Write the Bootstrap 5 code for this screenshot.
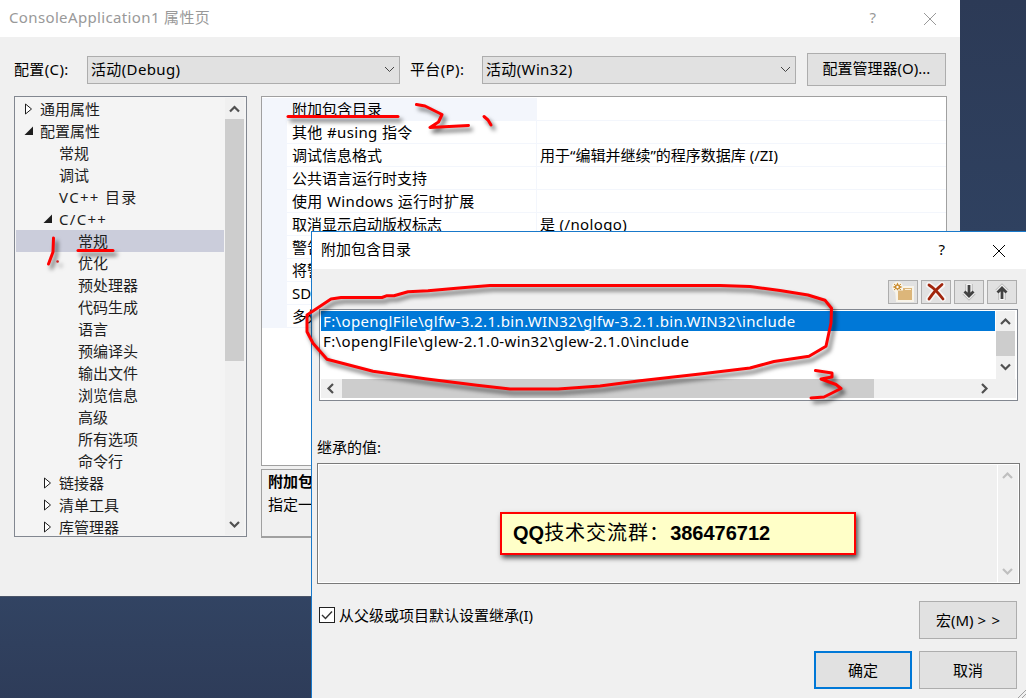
<!DOCTYPE html>
<html lang="zh-CN">
<head>
  <meta charset="utf-8">
  <meta name="viewport" content="width=device-width, initial-scale=1">
  <title>ConsoleApplication1 属性页</title>
  <link href="https://cdn.jsdelivr.net/npm/bootstrap@5.3.3/dist/css/bootstrap.min.css" rel="stylesheet">
  <script src="https://cdn.jsdelivr.net/npm/bootstrap@5.3.3/dist/js/bootstrap.bundle.min.js"></script>
  <style>
    body {
      width: 1026px; height: 698px; overflow: hidden; position: relative;
      background: linear-gradient(#2c3a56 0, #2f4160 235px, #324463 590px, #2e3c59 698px);
      font: 15px/22px "Noto Sans", "Noto Sans CJK SC", sans-serif;
      color: #000; white-space: nowrap;
    }
    svg { display: block; flex: none; }
    .win { position: absolute; background: #f0f0f0; }
    #props { left: 0; top: 0; width: 960px; height: 597px; border-bottom: 1px solid #4a5468; }
    #dirs { left: 311px; top: 231px; width: 716px; height: 468px; border: 1px solid #1979ca; }
    .titlebar { height: 37px; background: #fff; }
    .inactive { color: #999; padding-left: 9px; }
    /* Latin runs are set slightly wider than the font's own spacing */
    .lat { letter-spacing: .36px; }
    .sym { letter-spacing: 1.3px; }

    .combo, .push { border: 1px solid #adadad; background: #e1e1e1; }
    .combo { height: 28px; padding: 0 4px 1px 3px; }
    .push { border-radius: 0; padding: 0; font-size: 15px; line-height: 22px; color: #000; }
    .push.ok { border: 2px solid #0078d7; }

    .tree { width: 233px; height: 441px; border: 1px solid #828790; padding: 1px; background: #f4f4f4; }
    .tree-rows { width: 208px; height: 437px; color: #1e1e1e; }
    .node { height: 22px; padding-left: 8px; }
    .node svg { margin-right: 7px; }
    .node.l2 { padding-left: 43px; }
    .node.l2p { padding-left: 27px; }
    .node.l3 { padding-left: 62px; }
    .node.on { background: #cbcddb; }
    .vbar { width: 19px; background: #f0f0f0; }
    .thumb { background: #cdcdcd; }

    .grid { height: 370px; border: 1px solid #a0a0a0; padding: 1px 0 0; background: #fff; }
    .prop { height: 23px; }
    .gut { width: 25px; background: #f3f6fc; }
    .pname { width: 250px; padding-left: 5px; border-right: 1px solid #f3f6fc; border-bottom: 1px solid #f3f6fc; }
    .pval { padding-left: 3px; border-bottom: 1px solid #f3f6fc; }
    .prop.on .pname { background: #f3f6fc; }
    .hint { height: 69px; border: 1px solid #a0a0a0; border-bottom-width: 2px; padding: 0 6px; line-height: 23px; }

    .tool { width: 30px; height: 24px; }
    .dirlist { height: 92px; border: 1px solid #828790; padding: 1px; background: #fff; }
    .path { height: 20px; line-height: 20px; padding-left: 2px; }
    .path.on { background: #0078d7; color: #fff; }
    .inherit { height: 121px; width: 703px; border: 1px solid #7a7a7a; padding: 1px; box-shadow: inset 0 0 0 1px #fff; }
    .inherit .vbar { width: 21px; border-left: 1px solid #fff; }
    .tick { width: 16px; height: 16px; border: 1px solid #222; background: #fff; }

    .qq {
      position: absolute; left: 500px; top: 512px; width: 356px; height: 43px;
      border: 2px solid #f00; background: #ffffc8; box-shadow: 2px 3px 5px rgba(0, 0, 0, .7);
      padding-left: 11px; font: bold 20px/39px "Liberation Sans", "Noto Sans CJK SC", sans-serif;
    }
    .qq span { letter-spacing: 1px; font-weight: 400; }
    .pen { position: absolute; left: 0; top: 0; filter: drop-shadow(3px 4px 2px rgba(0, 0, 0, .6)); }
  </style>
</head>
<body>

<!-- property pages window -->
<div class="win" id="props">
  <div class="titlebar inactive d-flex align-items-center justify-content-between">
    <span class="lat pb-1">ConsoleApplication1 属性页</span>
    <span class="d-flex align-items-center">
      <span class="pb-1">?</span>
      <svg class="ms-5 me-4" width="12" height="12" stroke="#999" fill="none"><path d="M0 0L12 12M12 0L0 12"/></svg>
    </span>
  </div>

  <div class="d-flex align-items-center" style="height:59px;padding:6px 14px 0">
    <span class="lat" style="width:73px;padding-bottom:2px">配置(C):</span>
    <div class="combo d-flex align-items-center justify-content-between" style="width:313px">
      <span class="lat">活动(Debug)</span>
      <svg width="11" height="7" stroke="#444" fill="none"><path d="M1 1L5.5 5.5L10 1"/></svg>
    </div>
    <span class="lat" style="width:72px;margin-left:10px;padding-bottom:2px">平台(P):</span>
    <div class="combo d-flex align-items-center justify-content-between" style="width:314px">
      <span class="lat">活动(Win32)</span>
      <svg width="11" height="7" stroke="#444" fill="none"><path d="M1 1L5.5 5.5L10 1"/></svg>
    </div>
    <button class="btn push pb-1" style="width:139px;height:33px;margin-left:11px">配置管理器(O)...</button>
  </div>

  <div class="d-flex" style="padding:0 13px 0 14px">
    <div class="tree d-flex">
      <div class="tree-rows" id="tree"></div>
      <div class="vbar d-flex flex-column align-items-center" style="margin-left:1px">
        <svg width="19" height="21" stroke="#505050" stroke-width="2.2" fill="none"><path d="M5 13.5L9.5 9L14 13.5"/></svg>
        <div class="thumb w-100" style="height:242px"></div>
        <svg class="mt-auto" width="19" height="20" stroke="#505050" stroke-width="2.2" fill="none"><path d="M5 7L9.5 11.5L14 7"/></svg>
      </div>
    </div>
    <div class="flex-grow-1" style="margin-left:14px">
      <div class="grid" id="grid"></div>
      <div class="hint overflow-hidden" style="margin-top:3px"><b>附加包含目录</b><br>指定一个或多个要添加到包含路径中的目录</div>
    </div>
  </div>
</div>

<!-- additional include directories window -->
<div class="win" id="dirs">
  <div class="titlebar d-flex align-items-center justify-content-between" style="padding:0 21px 0 9px">
    <span class="pb-1">附加包含目录</span>
    <span class="d-flex align-items-center">
      <span class="pb-1" style="margin-right:48px">?</span>
      <svg width="12" height="12" stroke="#000" fill="none"><path d="M0 0L12 12M12 0L0 12"/></svg>
    </span>
  </div>

  <div style="padding:11px 8px 0 7px">
    <div class="d-flex justify-content-end" style="gap:3px;padding-right:1px">
      <button class="btn push tool d-flex align-items-center justify-content-center">
        <svg width="24" height="22" viewBox="0 0 24 22"><path d="M5 9H11L13 6H22V20H6Z" fill="#f8f4ea" stroke="#f8f4ea" stroke-width="2"/><circle cx="6.500" cy="6" r="5.500" fill="#f8f4ea"/><path d="M7 9.500H12V7H21V19H7Z" fill="#dcb67a"/><path d="M14 8.500H20" stroke="#fbf0dc"/><path d="M6.500 1.500L8 4.500L11.500 6L8 7.500L6.500 9.500L5 7.500L1.500 6L5 4.500Z" fill="#c98a2c"/><path d="M3 3L10 9M10 3L3 9" stroke="#c98a2c"/><circle cx="6.500" cy="6" r="1.200" fill="#fff"/></svg>
      </button>
      <button class="btn push tool d-flex align-items-center justify-content-center">
        <svg width="22" height="20" viewBox="0 0 22 20" fill="none" stroke-linecap="round"><path d="M4 3Q10 7 18 16.500M17 3Q9 9 4 17" stroke="#f6f6f6" stroke-width="6"/><path d="M4 3Q10.500 7 18 17M17 2.500Q9 9 4 17" stroke="#a1260d" stroke-width="2.800"/></svg>
      </button>
      <button class="btn push tool d-flex align-items-center justify-content-center">
        <svg width="18" height="20" viewBox="0 0 18 20" fill="none"><path d="M9 2V15M5 9.500L9 13.500L13 9.500" stroke="#bbb" stroke-width="7.500"/><path d="M9 2V15M5 9.500L9 13.500L13 9.500" stroke="#f6f6f6" stroke-width="5.500"/><path d="M9 3V14M4.500 9.500L9 14L13.500 9.500" stroke="#424242" stroke-width="2.800"/></svg>
      </button>
      <button class="btn push tool d-flex align-items-center justify-content-center">
        <svg width="18" height="20" viewBox="0 0 18 20" fill="none"><path d="M9 18V5M5 10.500L9 6.500L13 10.500" stroke="#bbb" stroke-width="7.500"/><path d="M9 18V5M5 10.500L9 6.500L13 10.500" stroke="#f6f6f6" stroke-width="5.500"/><path d="M9 17V6M4.500 10.500L9 6L13.500 10.500" stroke="#424242" stroke-width="2.800"/></svg>
      </button>
    </div>

    <div class="dirlist" style="margin-top:5px;width:699px">
      <div class="d-flex" style="height:68px">
        <div style="width:674px">
          <div class="path lat on">F:\openglFile\glfw-3.2.1.bin.WIN32\glfw-3.2.1.bin.WIN32\include</div>
          <div class="path lat">F:\openglFile\glew-2.1.0-win32\glew-2.1.0\include</div>
        </div>
        <div class="vbar d-flex flex-column" style="margin-left:1px">
          <svg width="19" height="20" stroke="#505050" stroke-width="2.2" fill="none"><path d="M5 13L9.500 8.500L14 13"/></svg>
          <div class="thumb" style="height:25px"></div>
          <svg width="19" height="20" stroke="#505050" stroke-width="2.2" fill="none"><path d="M5 8.500L9.500 13L14 8.500"/></svg>
        </div>
      </div>
      <div class="d-flex align-items-stretch" style="height:19px;background:#f0f0f0">
        <svg width="21" height="19" stroke="#505050" stroke-width="2.2" fill="none"><path d="M12 5L7.500 9.500L12 14"/></svg>
        <div class="thumb" style="width:532px"></div>
        <svg style="margin-left:100px" width="21" height="19" stroke="#505050" stroke-width="2.2" fill="none"><path d="M8 5L12.500 9.500L8 14"/></svg>
      </div>
    </div>
  </div>

  <div style="padding:35px 6px 0 5px">
    <div>继承的值:</div>
    <div class="inherit d-flex justify-content-end" style="margin-top:5px">
      <div class="vbar d-flex flex-column justify-content-between">
        <svg width="19" height="20" stroke="#bfbfbf" stroke-width="2.2" fill="none"><path d="M5 13L9.500 8.500L14 13"/></svg>
        <svg width="19" height="20" stroke="#bfbfbf" stroke-width="2.2" fill="none"><path d="M5 7L9.500 11.500L14 7"/></svg>
      </div>
    </div>
  </div>

  <div class="d-flex justify-content-between" style="padding:17px 9px 0 7px">
    <label class="d-flex align-items-center" style="height:28px;gap:4px">
      <span class="tick"><svg width="14" height="14" stroke="#333" stroke-width="1.4" fill="none"><path d="M2 7L5.500 10.500L12 3.500"/></svg></span>
      <span>从父级或项目默认设置继承(I)</span>
    </label>
    <button class="btn push" style="width:98px;height:38px">宏(M) <span class="sym">&gt;</span><span class="ms-1">&gt;</span></button>
  </div>
  <div class="d-flex justify-content-end" style="padding:12px 9px 0 0;gap:7px">
    <button class="btn push ok" style="width:98px;height:38px">确定</button>
    <button class="btn push" style="width:98px;height:38px">取消</button>
  </div>

  <!-- resize grip -->
  <svg class="position-absolute bottom-0 end-0" width="8" height="8" stroke="#a0a0a0" fill="none"><path d="M0 8L8 0M4 8L8 4"/></svg>
</div>

<div class="qq">QQ<span>技术交流群：</span>386476712</div>

<!-- red pen marks -->
<svg class="pen" width="1026" height="698" fill="none" stroke="#f00" stroke-width="3" stroke-linecap="round" stroke-linejoin="round">
  <path d="M288 116.500H398"/>
  <path d="M416.500 104.500L425 106L442 114.500L438.500 122L430 127.500L468.500 125.500"/>
  <path d="M484 116.500L488 120L491 125"/>
  <path d="M53.500 238L53 252L48.500 264"/>
  <path d="M57.500 261.500h.1" stroke-width="2.500" stroke="#c22"/>
  <path d="M78 250.500H113"/>
  <path d="M331 299L341 297.500H382L387 295.700H394L408 291.700L428 290.700L462 287.700L490 285.500H720L750 286.500L780 290.500L808 295L825 300.300L831.500 308.300L831 323L826 346.300L809 356.300L774 361.500L750 368L700 374L640 380.700L600 386L558 389H510L477 385.300L425 378.700L373 371.300L327 359.300L313 343.300L307 331.700V315Z"/>
  <path d="M815.500 370.500L832 373V377L821 379L836 384.500L841 388.500L824 397L811 398"/>
</svg>

<script>
  var nodes = [
    ["l1", "通用属性", "c"], ["l1", "配置属性", "o"], ["l2", "常规"], ["l2", "调试"], ["l2", "VC++ 目录"],
    ["l2p", "C/C++", "o"], ["l3 on", "常规"], ["l3", "优化"], ["l3", "预处理器"], ["l3", "代码生成"],
    ["l3", "语言"], ["l3", "预编译头"], ["l3", "输出文件"], ["l3", "浏览信息"], ["l3", "高级"],
    ["l3", "所有选项"], ["l3", "命令行"], ["l2p", "链接器", "c"], ["l2p", "清单工具", "c"], ["l2p", "库管理器", "c"]
  ];
  var arrows = {
    c: '<svg width="9" height="12" fill="#fff" stroke="#1e1e1e"><path d="M1.500 1V11L7.500 6Z"/></svg>',
    o: '<svg width="9" height="12" fill="#1e1e1e"><path d="M9 1.500V10H.5Z"/></svg>'
  };
  var txt = "";
  for (var i = 0; i < nodes.length; i++) {
    var cls = nodes[i][1].indexOf("+") > 0 ? "sym" : "";
    txt += '<div class="node d-flex align-items-center ' + nodes[i][0] + '">' + (arrows[nodes[i][2]] || "") +
      '<span class="' + cls + '">' + nodes[i][1] + "</span></div>";
  }
  document.getElementById("tree").innerHTML = txt;

  // the lower names run under the second window
  var rows = [
    ["附加包含目录", ""], ["其他 #using 指令", ""], ["调试信息格式", "用于“编辑并继续”的程序数据库 (/ZI)"],
    ["公共语言运行时支持", ""], ["使用 Windows 运行时扩展", ""], ["取消显示启动版权标志", "是 (/nologo)"],
    ["警告", ""], ["将警", ""], ["SDL", ""], ["多处", ""]
  ];
  txt = "";
  for (i = 0; i < rows.length; i++) {
    var lat = /[a-z]/.test(rows[i].join("")) ? " lat" : "";
    txt += '<div class="prop d-flex' + lat + (i === 0 ? " on" : "") + '"><div class="gut"></div><div class="pname">' + rows[i][0] +
      '</div><div class="pval flex-grow-1">' + rows[i][1] + "</div></div>";
  }
  // the row with "/nologo" keeps its Chinese name at normal spacing
  document.getElementById("grid").innerHTML = txt;
  document.querySelectorAll(".pname")[5].style.letterSpacing = "normal";
</script>
</body>
</html>
